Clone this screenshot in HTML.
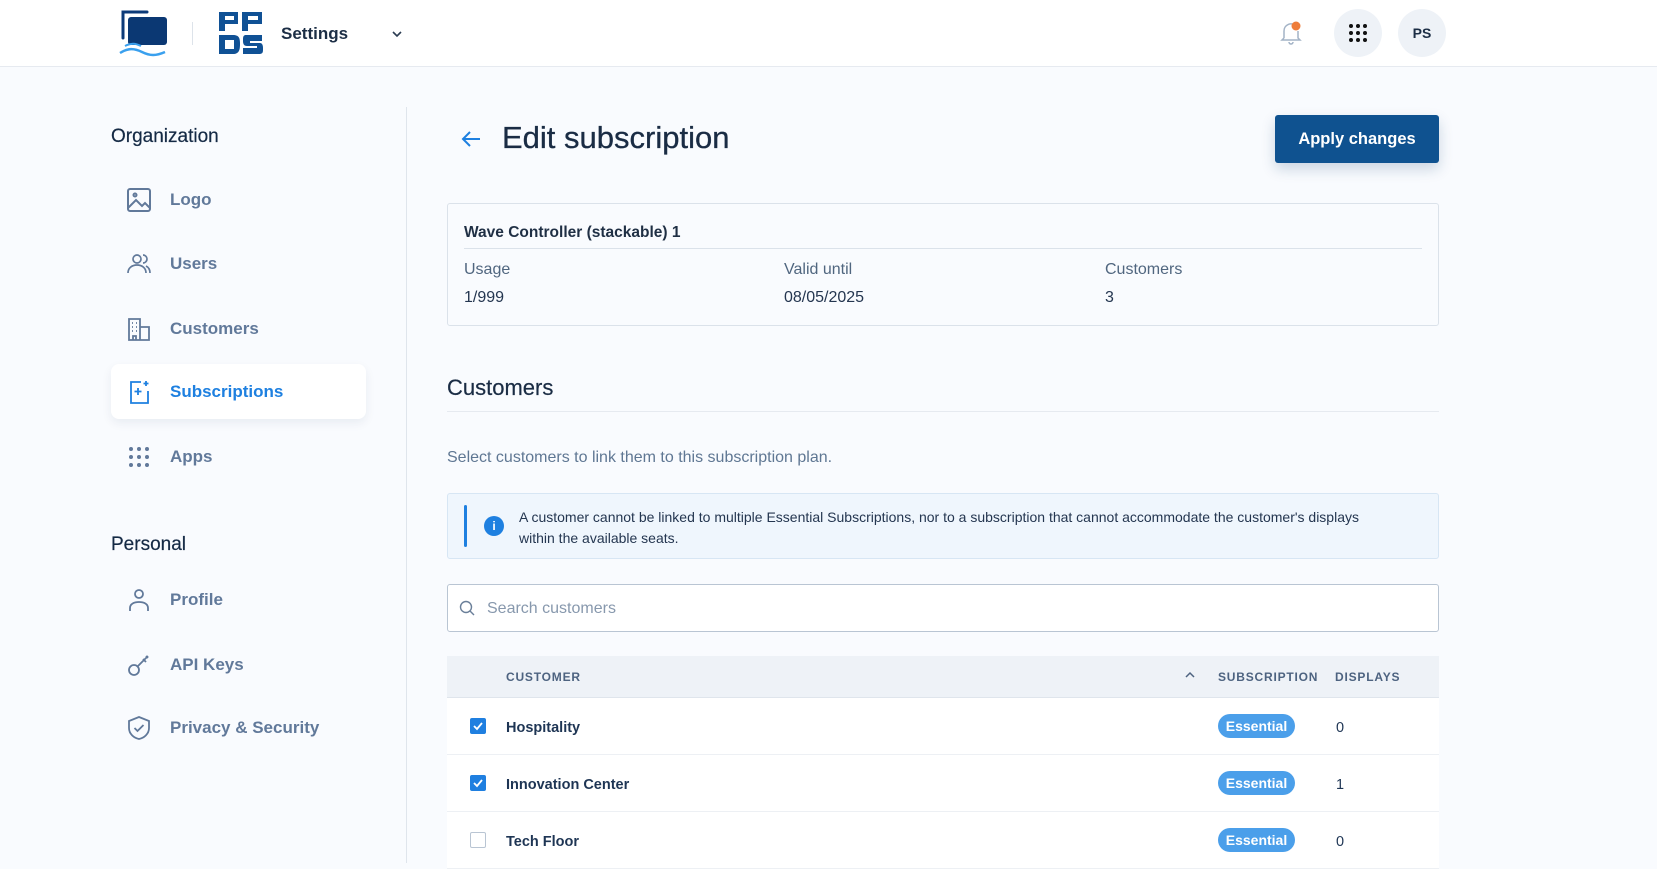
<!DOCTYPE html>
<html><head><meta charset="utf-8"><style>
*{box-sizing:border-box;margin:0;padding:0}
body{width:1657px;height:863px;overflow:hidden;background:#f9fbfe;font-family:"Liberation Sans",sans-serif;position:relative;color:#1c2e45}
.a{position:absolute}
.hdr{left:0;top:0;width:1657px;height:67px;background:#fff;border-bottom:1px solid #e6eaf0}
.nav{left:127px;font-size:17px;font-weight:700;color:#61799a;display:flex;align-items:center;height:30px}
.nav svg{width:24px;height:24px;margin-right:19px}
.sec{left:111px;font-size:19px;color:#152a45;font-weight:500;-webkit-text-stroke:.2px #152a45}
.lbl{font-size:16px;color:#50667f}
.th{font-size:12px;font-weight:700;color:#4d6380;letter-spacing:.8px}
.row{left:447px;width:992px;height:57px;background:#fff;border-bottom:1px solid #edf0f4}
.cb{position:absolute;left:23px;top:20px;width:16px;height:16px;border-radius:2px;background:#1f7fe0}
.cb.off{background:#fff;border:1.5px solid #b9c5d3}
.nm{position:absolute;left:59px;top:22px;font-size:14.5px;font-weight:700;color:#1e3554}
.bd{position:absolute;left:771px;top:16px;width:77px;height:24px;border-radius:12px;background:#4b9fea;color:#fff;font-size:14px;font-weight:700;text-align:center;line-height:24px}
.dv{position:absolute;left:889px;top:22px;font-size:14.5px;color:#1e3554}
</style></head><body>
<div class="a hdr"></div>
<svg class="a" style="left:118px;top:8px" width="52" height="50" viewBox="0 0 52 50"><path d="M5 30V4h24" fill="none" stroke="#0c3a78" stroke-width="3" stroke-linecap="round"/><rect x="10" y="9" width="39" height="28" rx="3" fill="#0b3873"/><path d="M2 45c8-5 14-5 22-1s14 4 23 0" fill="none" stroke="#3aa0ee" stroke-width="2.5"/><path d="M7 38c6-3 10-3 16 0" fill="none" stroke="#3aa0ee" stroke-width="2"/></svg>
<div class="a" style="left:192px;top:22px;width:1px;height:23px;background:#dde3ea"></div>
<svg class="a" style="left:217px;top:10px" width="47" height="46" viewBox="0 0 47 46"><rect width="47" height="46" rx="2" fill="#fff"/><g fill="#105195"><path d="M2 2h19v12H8v7H2z"/><path d="M25 2h20v12H31v7h-6z"/><path d="M2 25h14c6 0 7 3 7 9s-1 10-7 10H2z"/><path d="M27 25h18v6H33v2h10c2 0 3 2 3 5v2c0 3-1 4-4 4H26v-6h14v-2H30c-3 0-4-2-4-5v-2c0-3 1-4 3-4z"/></g><g fill="#fff"><rect x="8" y="6" width="9" height="4"/><rect x="31" y="6" width="10" height="4"/><rect x="8" y="30" width="9" height="9"/></g></svg>
<div class="a" style="left:281px;top:24px;font-size:17px;font-weight:700;color:#1c2e45">Settings</div>
<svg class="a" style="left:390px;top:29px" width="14" height="10" viewBox="0 0 14 10"><path d="M3 3l4 4 4-4" fill="none" stroke="#2b3c52" stroke-width="1.6"/></svg>
<svg class="a" style="left:1279px;top:20px" width="24" height="26" viewBox="0 0 24 26"><path d="M5 18v-7a7 7 0 0 1 12-5M19 11v7l2 2H3l2-2" fill="none" stroke="#a3b3c6" stroke-width="1.5"/><path d="M10 22a2 2 0 0 0 4 0" fill="none" stroke="#a3b3c6" stroke-width="1.5"/><circle cx="17" cy="6" r="4.5" fill="#ee7d3b"/></svg>
<div class="a" style="left:1334px;top:9px;width:48px;height:48px;border-radius:50%;background:#eef2f7"></div>
<svg class="a" style="left:1348px;top:23px" width="20" height="20" viewBox="0 0 20 20" fill="#111"><circle cx="3" cy="3" r="2"/><circle cx="10" cy="3" r="2"/><circle cx="17" cy="3" r="2"/><circle cx="3" cy="10" r="2"/><circle cx="10" cy="10" r="2"/><circle cx="17" cy="10" r="2"/><circle cx="3" cy="17" r="2"/><circle cx="10" cy="17" r="2"/><circle cx="17" cy="17" r="2"/></svg>
<div class="a" style="left:1398px;top:9px;width:48px;height:48px;border-radius:50%;background:#eef2f7;text-align:center;line-height:48px;font-size:14px;font-weight:700;color:#1c2e45">PS</div>

<div class="a sec" style="top:126px">Organization</div>
<div class="a" style="left:111px;top:364px;width:255px;height:55px;background:#fff;border-radius:8px;box-shadow:0 4px 10px rgba(20,40,80,.07)"></div>
<div class="a nav" style="top:185px"><svg viewBox="0 0 24 24" fill="none" stroke="#61799a" stroke-width="2"><rect x="1" y="1" width="22" height="22" rx="2"/><circle cx="8" cy="7" r="1.5"/><path d="M1 20l8-8 6 6 3-3 5 5"/></svg>Logo</div>
<div class="a nav" style="top:249px"><svg viewBox="0 0 24 24" fill="none" stroke="#61799a" stroke-width="1.7"><circle cx="10" cy="7" r="4"/><path d="M1 21c0-5 4-8 9-8s9 3 9 8M16 3a4 4 0 0 1 0 8M19 14c2 1 4 3 4 7"/></svg>Users</div>
<div class="a nav" style="top:314px"><svg viewBox="0 0 24 24" fill="none" stroke="#61799a" stroke-width="1.8"><path d="M2 23V2h11v21zM13 10h9v13H2"/><path d="M5 6h1M9 6h1M5 10h1M9 10h1M5 14h1M9 14h1M6 23v-4h3v4"/></svg>Customers</div>
<div class="a nav" style="top:377px;color:#1e80e0"><svg viewBox="0 0 24 24" fill="none" stroke="#1e80e0" stroke-width="1.8"><path d="M14 2H4v21h17V11"/><path d="M11 8v7M7.5 11.5h7M19 1v5M16.5 3.5h5"/></svg>Subscriptions</div>
<div class="a nav" style="top:442px"><svg viewBox="0 0 24 24" fill="#61799a"><circle cx="4" cy="4" r="2"/><circle cx="12" cy="4" r="2"/><circle cx="20" cy="4" r="2"/><circle cx="4" cy="12" r="2"/><circle cx="12" cy="12" r="2"/><circle cx="20" cy="12" r="2"/><circle cx="4" cy="20" r="2"/><circle cx="12" cy="20" r="2"/><circle cx="20" cy="20" r="2"/></svg>Apps</div>
<div class="a sec" style="top:534px">Personal</div>
<div class="a nav" style="top:585px"><svg viewBox="0 0 24 24" fill="none" stroke="#61799a" stroke-width="1.8"><circle cx="12" cy="6" r="4"/><path d="M3 23v-3c0-4 4-6 9-6s9 2 9 6v3"/></svg>Profile</div>
<div class="a nav" style="top:650px"><svg viewBox="0 0 24 24" fill="none" stroke="#61799a" stroke-width="1.8"><circle cx="7" cy="17" r="5"/><path d="M11 13l10-10M16 6l3 3M19 3l2 2"/></svg>API Keys</div>
<div class="a nav" style="top:713px"><svg viewBox="0 0 24 24" fill="none" stroke="#61799a" stroke-width="1.8"><path d="M12 1l10 4v7c0 6-5 10-10 11C7 22 2 18 2 12V5z"/><path d="M7.5 12l3 3 6-6"/></svg>Privacy &amp; Security</div>
<div class="a" style="left:406px;top:107px;width:1px;height:756px;background:#dfe5ec"></div>

<svg class="a" style="left:460px;top:129px" width="22" height="20" viewBox="0 0 22 20"><path d="M20 10H3M10 3l-7 7 7 7" fill="none" stroke="#1e80e0" stroke-width="2"/></svg>
<div class="a" style="left:502px;top:120px;font-size:31px;font-weight:500;color:#1a2c44;-webkit-text-stroke:.3px #1a2c44">Edit subscription</div>
<div class="a" style="left:1275px;top:115px;width:164px;height:48px;background:#0f5290;border-radius:3px;box-shadow:0 6px 14px rgba(15,60,110,.2);color:#fff;font-size:16.5px;font-weight:700;text-align:center;line-height:48px">Apply changes</div>

<div class="a" style="left:447px;top:203px;width:992px;height:123px;border:1px solid #dbe2ea;border-radius:3px;background:#f9fbfe"></div>
<div class="a" style="left:464px;top:224px;font-size:15.5px;font-weight:700;color:#1f2f44">Wave Controller (stackable) 1</div>
<div class="a" style="left:464px;top:248px;width:958px;height:1px;background:#dbe2ea"></div>
<div class="a lbl" style="left:464px;top:261px">Usage</div><div class="a lbl" style="left:464px;top:289px;color:#243650">1/999</div>
<div class="a lbl" style="left:784px;top:261px">Valid until</div><div class="a lbl" style="left:784px;top:289px;color:#243650">08/05/2025</div>
<div class="a lbl" style="left:1105px;top:261px">Customers</div><div class="a lbl" style="left:1105px;top:289px;color:#243650">3</div>

<div class="a" style="left:447px;top:375px;font-size:22px;font-weight:500;color:#1a2c44;-webkit-text-stroke:.2px #1a2c44">Customers</div>
<div class="a" style="left:447px;top:411px;width:992px;height:1px;background:#e6eaf0"></div>
<div class="a" style="left:447px;top:449px;font-size:16px;color:#5f7793">Select customers to link them to this subscription plan.</div>

<div class="a" style="left:447px;top:493px;width:992px;height:66px;background:#eff6fd;border:1px solid #d7e6f4;border-radius:3px"></div>
<div class="a" style="left:464px;top:505px;width:3px;height:42px;background:#1e80e0;border-radius:2px"></div>
<div class="a" style="left:484px;top:516px;width:20px;height:20px;border-radius:50%;background:#1e80e0;color:#fff;font-size:12px;font-weight:700;text-align:center;line-height:20px">i</div>
<div class="a" style="left:519px;top:507px;font-size:14px;line-height:21px;color:#243650;width:900px">A customer cannot be linked to multiple Essential Subscriptions, nor to a subscription that cannot accommodate the customer's displays<br>within the available seats.</div>

<div class="a" style="left:447px;top:584px;width:992px;height:48px;border:1px solid #b9c5d3;border-radius:3px;background:#fff"></div>
<svg class="a" style="left:459px;top:600px" width="16" height="16" viewBox="0 0 16 16"><circle cx="7" cy="7" r="5.5" fill="none" stroke="#6a7f99" stroke-width="1.4"/><path d="M11 11l4 4" stroke="#6a7f99" stroke-width="1.4"/></svg>
<div class="a" style="left:487px;top:600px;font-size:16px;color:#8798ad">Search customers</div>

<div class="a" style="left:447px;top:656px;width:992px;height:42px;background:#eef2f7;border-bottom:1px solid #dfe5ec"></div>
<div class="a th" style="left:506px;top:670px">CUSTOMER</div>
<svg class="a" style="left:1184px;top:670px" width="12" height="10" viewBox="0 0 12 10"><path d="M2 7l4-4 4 4" fill="none" stroke="#4d6380" stroke-width="1.5"/></svg>
<div class="a th" style="left:1218px;top:670px">SUBSCRIPTION</div>
<div class="a th" style="left:1335px;top:670px">DISPLAYS</div>

<div class="a row" style="top:698px"><div class="cb"><svg width="16" height="16" viewBox="0 0 16 16"><path d="M4 8l3 3 5-6" fill="none" stroke="#fff" stroke-width="1.8"/></svg></div><div class="nm">Hospitality</div><div class="bd">Essential</div><div class="dv">0</div></div>
<div class="a row" style="top:755px"><div class="cb"><svg width="16" height="16" viewBox="0 0 16 16"><path d="M4 8l3 3 5-6" fill="none" stroke="#fff" stroke-width="1.8"/></svg></div><div class="nm">Innovation Center</div><div class="bd">Essential</div><div class="dv">1</div></div>
<div class="a row" style="top:812px"><div class="cb off"></div><div class="nm">Tech Floor</div><div class="bd">Essential</div><div class="dv">0</div></div>
</body></html>
